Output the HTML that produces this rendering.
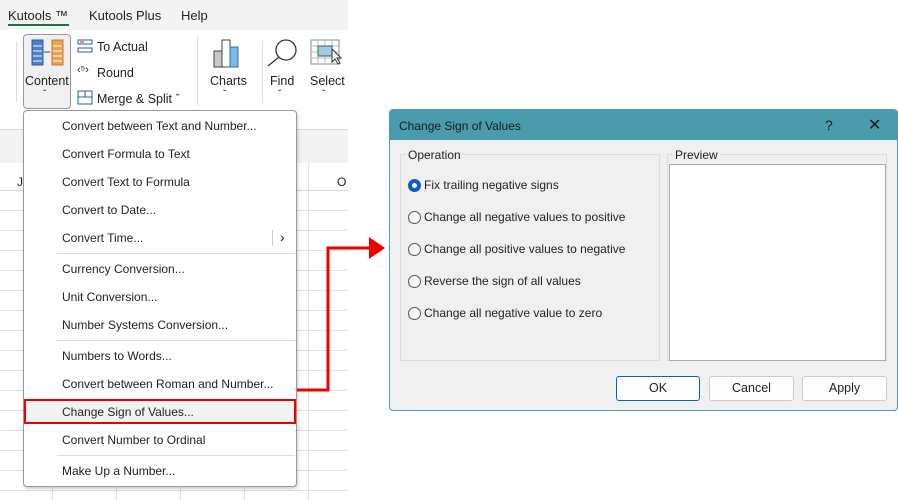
<!DOCTYPE html><html><head><style>
*{margin:0;padding:0;box-sizing:border-box}
body{width:898px;height:500px;background:#fff;font-family:"Liberation Sans",sans-serif;position:relative;overflow:hidden;color:#222}
.a{position:absolute}
.t{font-size:12px;white-space:nowrap}
</style></head><body>
<div class="a" style="left:0;top:0;width:348px;height:30px;background:#f3f3f3"></div>
<div class="a t" style="left:8px;top:8px;font-size:13px">Kutools ™</div>
<div class="a" style="left:8px;top:24px;width:61px;height:2px;background:#1e7145"></div>
<div class="a t" style="left:89px;top:8px;font-size:13px">Kutools Plus</div>
<div class="a t" style="left:181px;top:8px;font-size:13px">Help</div>
<div class="a" style="left:0;top:129px;width:348px;height:1px;background:#d6d6d6"></div>
<div class="a" style="left:0;top:130px;width:348px;height:33px;background:#f3f3f3"></div>
<div class="a" style="left:0;top:163px;width:348px;height:28px;background:#fff;border-bottom:1px solid #d6d6d6"></div>
<div class="a t" style="left:17px;top:175px">J</div>
<div class="a t" style="left:337px;top:175px">O</div>
<div class="a" style="left:0;top:191px;width:348px;height:309px;background:repeating-linear-gradient(to bottom,transparent 0,transparent 19px,#e1e1e1 19px,#e1e1e1 20px)"></div>
<div class="a" style="left:52px;top:191px;width:1px;height:309px;background:#e1e1e1"></div>
<div class="a" style="left:116px;top:191px;width:1px;height:309px;background:#e1e1e1"></div>
<div class="a" style="left:180px;top:191px;width:1px;height:309px;background:#e1e1e1"></div>
<div class="a" style="left:244px;top:191px;width:1px;height:309px;background:#e1e1e1"></div>
<div class="a" style="left:308px;top:163px;width:1px;height:337px;background:#e1e1e1"></div>
<div class="a" style="left:16px;top:42px;width:1px;height:60px;background:#ddd"></div>
<div class="a" style="left:23px;top:34px;width:48px;height:75px;border:1px solid #999;border-radius:4px;background:#f0f0f0"></div>
<svg class="a" style="left:30px;top:38px" width="36" height="30"><rect x="2" y="2" width="11" height="25" fill="#4a7fc9" stroke="#2a5ea8"/><rect x="22" y="2" width="11" height="25" fill="#f0a050" stroke="#c8782a"/><g stroke="#fff"><line x1="3" y1="8" x2="12" y2="8"/><line x1="3" y1="13" x2="12" y2="13"/><line x1="3" y1="18" x2="12" y2="18"/><line x1="3" y1="23" x2="12" y2="23"/><line x1="23" y1="8" x2="32" y2="8"/><line x1="23" y1="13" x2="32" y2="13"/><line x1="23" y1="18" x2="32" y2="18"/><line x1="23" y1="23" x2="32" y2="23"/></g><path d="M14 14h6" stroke="#444"/></svg>
<div class="a t" style="left:25px;top:74px;font-size:12.5px">Content</div>
<div class="a t" style="left:43px;top:89px;font-size:10px">ˇ</div>
<svg class="a" style="left:77px;top:38px" width="16" height="16"><rect x="1" y="2" width="14" height="4" fill="none" stroke="#2a5ea8"/><rect x="1" y="10" width="14" height="4" fill="none" stroke="#2a5ea8"/><line x1="3" y1="4" x2="7" y2="4" stroke="red"/></svg>
<div class="a t" style="left:97px;top:40px;font-size:12.5px">To Actual</div>
<div class="a t" style="left:77px;top:64px;font-size:11px">‹⁵›</div>
<div class="a t" style="left:97px;top:66px;font-size:12.5px">Round</div>
<svg class="a" style="left:77px;top:90px" width="16" height="16"><rect x="1" y="1" width="14" height="13" fill="none" stroke="#2a5ea8"/><line x1="1" y1="7" x2="15" y2="7" stroke="#2a5ea8"/><line x1="8" y1="1" x2="8" y2="7" stroke="#2a5ea8"/></svg>
<div class="a t" style="left:97px;top:92px;font-size:12.5px">Merge &amp; Split ˇ</div>
<div class="a" style="left:197px;top:36px;width:1px;height:70px;background:#ddd"></div>
<svg class="a" style="left:212px;top:38px" width="30" height="30"><rect x="2" y="13" width="8" height="16" fill="#c8c8c8" stroke="#444"/><rect x="10" y="2" width="8" height="27" fill="#fff" stroke="#444"/><rect x="18" y="9" width="8" height="20" fill="#7db8e8" stroke="#2a6eb0"/></svg>
<div class="a t" style="left:210px;top:74px;font-size:12.5px">Charts</div>
<div class="a t" style="left:223px;top:89px;font-size:10px">ˇ</div>
<div class="a" style="left:262px;top:42px;width:1px;height:60px;background:#ddd"></div>
<svg class="a" style="left:266px;top:38px" width="32" height="30"><circle cx="20" cy="12" r="10" fill="none" stroke="#333" stroke-width="1.3"/><line x1="13" y1="19" x2="2" y2="28" stroke="#333" stroke-width="1.3"/></svg>
<div class="a t" style="left:270px;top:74px;font-size:12.5px">Find</div>
<div class="a t" style="left:278px;top:89px;font-size:10px">ˇ</div>
<svg class="a" style="left:310px;top:39px" width="32" height="28"><rect x="1" y="1" width="28" height="24" fill="#fff" stroke="#888"/><g stroke="#bbb"><line x1="1" y1="7" x2="29" y2="7"/><line x1="1" y1="13" x2="29" y2="13"/><line x1="1" y1="19" x2="29" y2="19"/><line x1="8" y1="1" x2="8" y2="25"/><line x1="15" y1="1" x2="15" y2="25"/><line x1="22" y1="1" x2="22" y2="25"/></g><rect x="8" y="7" width="14" height="10" fill="#a8c8e8" stroke="#1e7145"/><path d="M22 10l0 13 3-3 3 5 2-1-3-5 4 0z" fill="#fff" stroke="#333"/></svg>
<div class="a t" style="left:310px;top:74px;font-size:12.5px">Select</div>
<div class="a t" style="left:322px;top:89px;font-size:10px">ˇ</div>
<div class="a" style="left:23px;top:110px;width:274px;height:377px;background:#fff;border:1px solid #999;border-radius:4px;box-shadow:1px 2px 3px rgba(0,0,0,.2)"></div>
<div class="a t" style="left:62px;top:119px">Convert between Text and Number...</div>
<div class="a t" style="left:62px;top:147px">Convert Formula to Text</div>
<div class="a t" style="left:62px;top:175px">Convert Text to Formula</div>
<div class="a t" style="left:62px;top:203px">Convert to Date...</div>
<div class="a t" style="left:62px;top:231px">Convert Time...</div>
<div class="a" style="left:272px;top:230px;width:1px;height:16px;background:#ccc"></div>
<div class="a t" style="left:280px;top:229px;font-size:14px">›</div>
<div class="a" style="left:57px;top:253px;width:238px;height:1px;background:#ddd"></div>
<div class="a t" style="left:62px;top:262px">Currency Conversion...</div>
<div class="a t" style="left:62px;top:290px">Unit Conversion...</div>
<div class="a t" style="left:62px;top:318px">Number Systems Conversion...</div>
<div class="a" style="left:57px;top:340px;width:238px;height:1px;background:#ddd"></div>
<div class="a t" style="left:62px;top:349px">Numbers to Words...</div>
<div class="a t" style="left:62px;top:377px">Convert between Roman and Number...</div>
<div class="a" style="left:24px;top:399px;width:272px;height:25px;background:#f3f3f3;border:2px solid #e00"></div>
<div class="a t" style="left:62px;top:405px">Change Sign of Values...</div>
<div class="a t" style="left:62px;top:433px">Convert Number to Ordinal</div>
<div class="a" style="left:57px;top:455px;width:238px;height:1px;background:#ddd"></div>
<div class="a t" style="left:62px;top:464px">Make Up a Number...</div>
<svg class="a" style="left:295px;top:235px" width="95" height="180"><path d="M2 155H33V13H75" fill="none" stroke="#e00" stroke-width="3"/><path d="M74 2L90 13L74 24z" fill="#e00"/></svg>
<div class="a" style="left:389px;top:109px;width:509px;height:302px;background:#f0f0f0;border:1px solid #4a9bab;border-radius:4px;overflow:hidden">
<div class="a" style="left:0;top:0;width:509px;height:30px;background:#4a9bab"></div>
<div class="a t" style="left:9px;top:9px;color:#1a1a1a">Change Sign of Values</div>
<div class="a t" style="left:435px;top:7px;font-size:14px;color:#1a1a1a">?</div>
<div class="a t" style="left:478px;top:5px;font-size:16px;color:#1a1a1a">✕</div>
<div class="a" style="left:10px;top:44px;width:260px;height:207px;border:1px solid #dcdcdc"></div>
<div class="a t" style="left:16px;top:38px;background:#f0f0f0;padding:0 2px">Operation</div>
<div class="a" style="left:277px;top:44px;width:220px;height:207px;border:1px solid #dcdcdc"></div>
<div class="a t" style="left:283px;top:38px;background:#f0f0f0;padding:0 2px">Preview</div>
<div class="a" style="left:279px;top:54px;width:217px;height:197px;background:#fff;border:1px solid #aaa"></div>
</div>
<div class="a" style="left:408px;top:179px;width:13px;height:13px;border-radius:50%;background:#0a5fc4"></div>
<div class="a" style="left:412px;top:183px;width:5px;height:5px;border-radius:50%;background:#fff"></div>
<div class="a t" style="left:424px;top:178px">Fix trailing negative signs</div>
<div class="a" style="left:408px;top:211px;width:13px;height:13px;border-radius:50%;border:1px solid #555;background:#f8f8f8"></div>
<div class="a t" style="left:424px;top:210px">Change all negative values to positive</div>
<div class="a" style="left:408px;top:243px;width:13px;height:13px;border-radius:50%;border:1px solid #555;background:#f8f8f8"></div>
<div class="a t" style="left:424px;top:242px">Change all positive values to negative</div>
<div class="a" style="left:408px;top:275px;width:13px;height:13px;border-radius:50%;border:1px solid #555;background:#f8f8f8"></div>
<div class="a t" style="left:424px;top:274px">Reverse the sign of all values</div>
<div class="a" style="left:408px;top:307px;width:13px;height:13px;border-radius:50%;border:1px solid #555;background:#f8f8f8"></div>
<div class="a t" style="left:424px;top:306px">Change all negative value to zero</div>
<div class="a t" style="left:616px;top:376px;width:84px;height:25px;border:1px solid #0a5fc4;border-radius:3px;background:#fdfdfd;text-align:center;line-height:23px;font-size:12.5px">OK</div>
<div class="a t" style="left:709px;top:376px;width:85px;height:25px;border:1px solid #ccc;border-radius:3px;background:#fdfdfd;text-align:center;line-height:23px;font-size:12.5px">Cancel</div>
<div class="a t" style="left:802px;top:376px;width:85px;height:25px;border:1px solid #ccc;border-radius:3px;background:#fdfdfd;text-align:center;line-height:23px;font-size:12.5px">Apply</div>
</body></html>
